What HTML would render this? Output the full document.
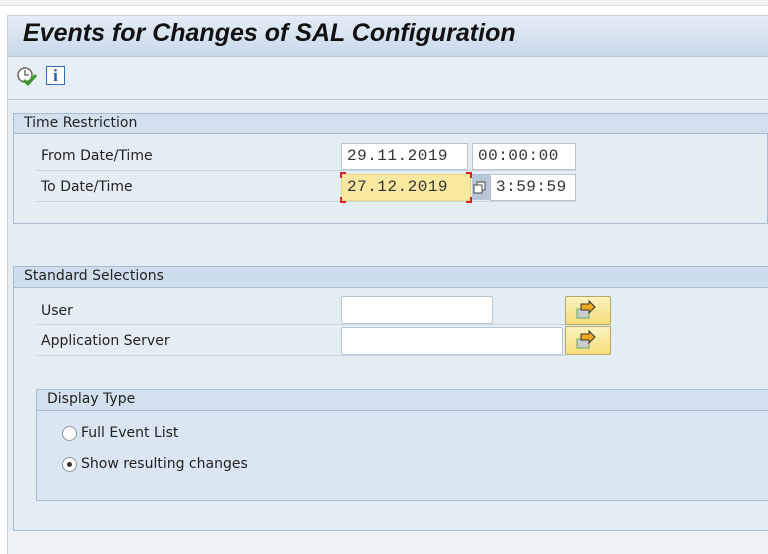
<!DOCTYPE html>
<html><head><style>
*{margin:0;padding:0;box-sizing:border-box}
body{width:768px;height:554px;background:#fff;font-family:"DejaVu Sans","Liberation Sans",sans-serif;position:relative;overflow:hidden;font-size:14px;color:#222}
.a{position:absolute}
.inp{position:absolute;background:#fff;border:1px solid #b9c6d4;font-family:"Liberation Mono",monospace;font-size:16px;color:#333;padding:3px 5px 0;letter-spacing:0.5px}
.lbl{position:absolute;left:41px;font-size:14px}
.line{position:absolute;left:36px;height:1px;background:#c9d5e2}
.hdr{position:absolute;background:#d3e1ee;border-bottom:1px solid #a9bcd0;font-size:14px;padding:1px 0 0 10px}
.btn{position:absolute;width:46px;height:29px;background:linear-gradient(#fdf3bf,#f5dc7c);border:1px solid #b6a767;border-radius:2px}
.rad{position:absolute;width:15px;height:15px;border-radius:50%;border:1px solid #8a96a4;background:#fff}
.br{position:absolute;width:6px;height:6px;border-color:#d2232a;border-style:solid}
</style></head><body>
<div class="a" style="left:0;top:0;width:768px;height:6px;background:#f4f4f4;border-bottom:1px solid #dde2e7"></div>
<div class="a" style="left:7px;top:15px;width:761px;height:539px;background:#eef2f6;border-left:1px solid #c9d3dd;border-top:1px solid #c9d3dd"></div>
<div class="a" style="left:8px;top:16px;width:760px;height:41px;background:linear-gradient(#e4edf6,#c9d9ea);border-bottom:1px solid #b3c5d8"></div>
<div class="a" style="left:23px;top:19px;font-family:'Liberation Sans',sans-serif;font-size:25px;font-weight:bold;font-style:italic;color:#111">Events for Changes of SAL Configuration</div>
<div class="a" style="left:8px;top:58px;width:760px;height:42px;background:#e7eef6;border-bottom:1px solid #b6c6d6"></div>
<svg class="a" style="left:16px;top:66px" width="22" height="22" viewBox="0 0 22 22"><circle cx="9" cy="9" r="7" fill="#fff" stroke="#666" stroke-width="1.5"/><path d="M9 4V9H13" stroke="#555" stroke-width="1.3" fill="none"/><path d="M8 14l4 4 8-9" stroke="#3a9a2a" stroke-width="3" fill="none"/></svg>
<div class="a" style="left:46px;top:66px;width:19px;height:19px;border:1px solid #2a6fb8;background:#fff;color:#1b5fae;font-family:'Liberation Serif',serif;font-weight:bold;font-size:17px;text-align:center;line-height:17px">i</div>
<div class="a" style="left:8px;top:101px;width:760px;height:430px;background:#e4ecf4"></div>
<div class="a" style="left:13px;top:113px;width:755px;height:111px;border:1px solid #a9bcd0;background:#e4ecf4"></div>
<div class="hdr" style="left:14px;top:114px;width:754px;height:20px">Time Restriction</div>
<div class="lbl" style="top:148px">From Date/Time</div>
<div class="line" style="top:170px;width:540px"></div>
<div class="lbl" style="top:179px">To Date/Time</div>
<div class="line" style="top:201px;width:540px"></div>
<div class="inp" style="left:341px;top:143px;width:127px;height:27px">29.11.2019</div>
<div class="inp" style="left:472px;top:143px;width:104px;height:27px">00:00:00</div>
<div class="inp" style="left:341px;top:174px;width:130px;height:27px;background:#fbe8a0;border-color:#f0d97a">27.12.2019</div>
<div class="br" style="left:340px;top:172px;border-width:2px 0 0 2px"></div>
<div class="br" style="left:466px;top:172px;border-width:2px 2px 0 0"></div>
<div class="br" style="left:340px;top:197px;border-width:0 0 2px 2px"></div>
<div class="br" style="left:466px;top:197px;border-width:0 2px 2px 0"></div>
<div class="a" style="left:472px;top:174px;width:20px;height:26px;background:#b8c7d8"></div>
<svg class="a" style="left:473px;top:181px" width="14" height="14"><rect x="4" y="1" width="8" height="8" fill="#fff" stroke="#444"/><rect x="1" y="4" width="8" height="8" fill="#fff" stroke="#444"/></svg>
<div class="inp" style="left:490px;top:174px;width:86px;height:27px">3:59:59</div>
<div class="a" style="left:13px;top:266px;width:755px;height:265px;border:1px solid #a9bcd0;border-right:none"></div>
<div class="hdr" style="left:14px;top:267px;width:754px;height:21px;background:#cfdeec">Standard Selections</div>
<div class="lbl" style="top:303px">User</div>
<div class="line" style="top:324px;width:530px"></div>
<div class="lbl" style="top:333px">Application Server</div>
<div class="line" style="top:355px;width:530px"></div>
<div class="inp" style="left:341px;top:296px;width:152px;height:28px;border-radius:2px"></div>
<div class="inp" style="left:341px;top:327px;width:222px;height:28px;border-radius:2px"></div>
<div class="btn" style="left:565px;top:296px"><svg width="44" height="27"><rect x="11" y="12" width="12" height="9" fill="#ccc" stroke="#6a6"/><path d="M15 7h8v-3l6 6-6 6v-3h-8z" fill="#f2a81d" stroke="#333"/></svg></div>
<div class="btn" style="left:565px;top:326px"><svg width="44" height="27"><rect x="11" y="12" width="12" height="9" fill="#ccc" stroke="#6a6"/><path d="M15 7h8v-3l6 6-6 6v-3h-8z" fill="#f2a81d" stroke="#333"/></svg></div>
<div class="a" style="left:36px;top:389px;width:732px;height:112px;border:1px solid #a9bcd0;border-right:none;background:#dae6f1"></div>
<div class="hdr" style="left:37px;top:390px;width:731px;height:21px">Display Type</div>
<div class="rad" style="left:62px;top:426px"></div>
<div class="a" style="left:81px;top:425px">Full Event List</div>
<div class="rad" style="left:62px;top:457px"><div style="position:absolute;left:4px;top:4px;width:5px;height:5px;border-radius:50%;background:#333"></div></div>
<div class="a" style="left:81px;top:456px">Show resulting changes</div>
<div class="a" style="left:8px;top:532px;width:760px;height:22px;background:#eef1f5"></div>
</body></html>
